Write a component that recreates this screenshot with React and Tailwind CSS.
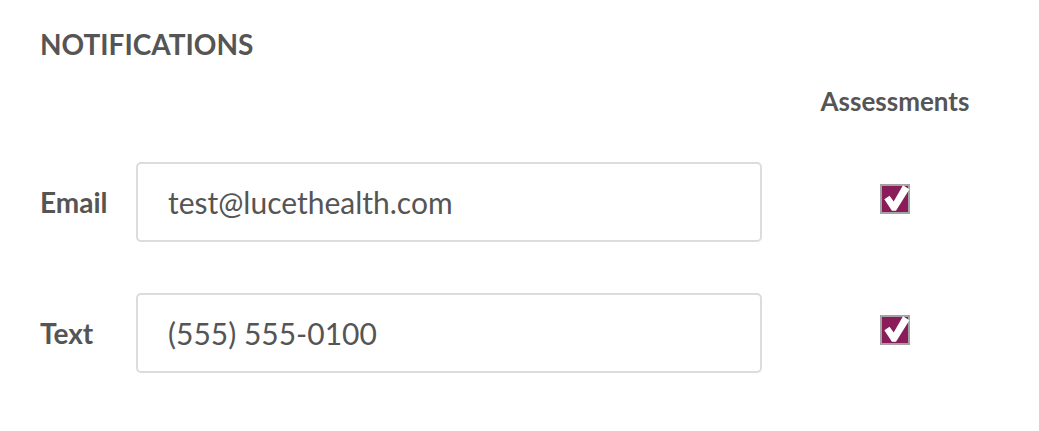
function Check() {
  return (
    <span className="relative inline-flex h-[30px] w-[30px] items-center justify-center border-2 border-[#a3a3a3] bg-[#8a1c5a]">
      <svg viewBox="0 0 24 24" className="absolute left-[0px] top-[-2px] h-[28px] w-[28px]">
        <path d="M2 13 L6.5 10 L10 15 L18 1 L23.5 4.5 L12 23 L8.5 23 Z" fill="#fff" />
      </svg>
    </span>
  );
}

const ROWS = [
  { label: 'Email', value: 'test@lucethealth.com' },
  { label: 'Text', value: '(555) 555-0100' },
];

const COLS = 'grid grid-cols-[96px_626px_266px] items-center';

export default function App() {
  return (
    <div className="h-[431px] w-[1039px] bg-white pl-10 pt-[27px] font-['Lato',sans-serif] text-[#555]">
      <h2 className="text-[28px] font-bold leading-[34px]">NOTIFICATIONS</h2>

      <div className={`${COLS} mt-[24px]`}>
        <div />
        <div />
        <div className="text-center text-[26px] font-bold leading-[32px]">Assessments</div>
      </div>

      <div className={`${COLS} mt-[45px] gap-y-[51px]`}>
        {ROWS.map((r) => (
          <div key={r.label} className="contents">
            <div className="text-[28px] font-bold">{r.label}</div>
            <div className="flex h-[80px] items-center rounded-[5px] border-2 border-[#dcdcdc] px-[30px] text-[30px]">
              {r.value}
            </div>
            <div className="mb-[6px] flex justify-center">
              <Check />
            </div>
          </div>
        ))}
      </div>
    </div>
  );
}
